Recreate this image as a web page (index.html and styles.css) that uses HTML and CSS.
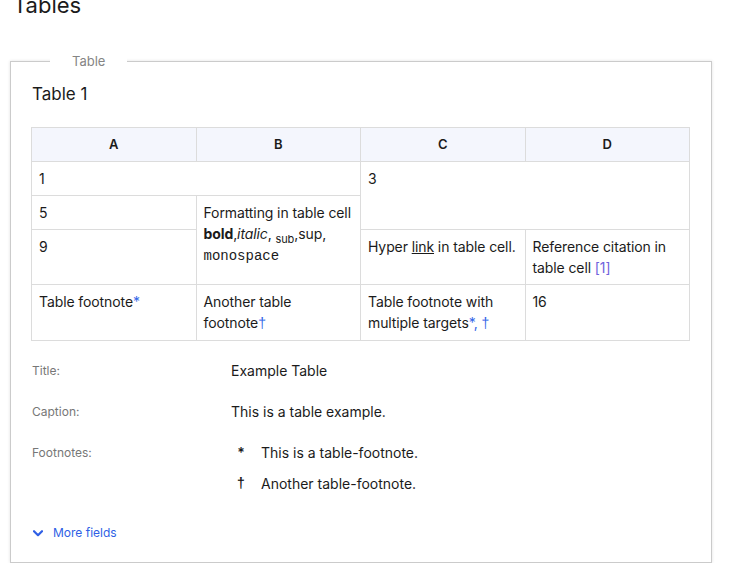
FILE: index.html
```html
<!DOCTYPE html>
<html>
<head>
<meta charset="utf-8">
<link rel="stylesheet" href="styles.css">
</head>
<body>
<h1 class="page-title">Tables</h1>
<section class="panel">
  <div class="panel-legend">Table</div>
  <h2 class="table-name">Table 1</h2>
  <table class="data-table">
    <thead>
      <tr><th>A</th><th>B</th><th>C</th><th>D</th></tr>
    </thead>
    <tbody>
      <tr><td colspan="2">1</td><td colspan="2" rowspan="2">3</td></tr>
      <tr><td>5</td><td rowspan="2">Formatting in table cell <b>bold</b>,<i>italic</i>, <sub>sub</sub>,<span>sup</span>, <code>monospace</code></td></tr>
      <tr><td>9</td><td>Hyper <a class="plain-link" href="#">link</a> in table cell.</td><td>Reference citation in table cell <a class="cite" href="#">[1]</a></td></tr>
      <tr><td>Table footnote<span class="fn">*</span></td><td>Another table footnote<span class="fn dagger">†</span></td><td>Table footnote with multiple targets<span class="fn">*</span><span class="fn">, <span class="dagger">†</span></span></td><td>16</td></tr>
    </tbody>
  </table>
  <div class="fields">
    <div class="field-label">Title:</div>
    <div class="field-value">Example Table</div>
    <div class="field-label">Caption:</div>
    <div class="field-value">This is a table example.</div>
    <div class="field-label">Footnotes:</div>
    <div class="field-value">
      <ul class="fn-list">
        <li><span class="fn-mark">*</span><span>This is a table-footnote.</span></li>
        <li><span class="fn-mark dagger">†</span><span>Another table-footnote.</span></li>
      </ul>
    </div>
  </div>
  <a class="more" href="#">
    <svg class="chev" width="10" height="7" viewBox="0 0 10 7"><path d="M1 1.2 L5 5.2 L9 1.2" fill="none" stroke="currentColor" stroke-width="2.2" stroke-linecap="round" stroke-linejoin="round"/></svg>
    <span>More fields</span>
  </a>
</section>
</body>
</html>
```
FILE: styles.css
```css
html, body {
  margin: 0;
  padding: 0;
  background: #fff;
}
body {
  font-family: Inter, "Noto Sans", sans-serif;
  color: #1b1b1b;
}
.page-title {
  font-size: 22px;
  font-weight: 400;
  line-height: 27px;
  margin: -8px 0 0 13px;
}
.panel {
  position: relative;
  box-sizing: border-box;
  width: 702px;
  margin: 42px 0 0 10px;
  padding: 20px 20px 20px 20px;
  border: 1px solid #cbcbcb;
  box-shadow: 0 0 3px rgba(0,0,0,0.12);
}
.panel-legend {
  position: absolute;
  top: -9px;
  left: 39px;
  padding: 0 22px;
  background: #fff;
  font-size: 13px;
  line-height: 16px;
  color: #858585;
}
.table-name {
  font-size: 17px;
  font-weight: 400;
  line-height: 24px;
  margin: 0 0 21px 1px;
}
.data-table {
  width: 659px;
  margin-left: 0;
  table-layout: fixed;
  border-collapse: collapse;
  font-size: 14px;
  line-height: 21px;
  letter-spacing: -0.1px;
}
.data-table th, .data-table td {
  border: 1px solid #dcdcdc;
  padding: 6px 3px 6px 7px;
  vertical-align: top;
  text-align: left;
}
.data-table th {
  background: #f4f6fd;
  text-align: center;
  font-weight: 600;
  font-size: 13px;
  padding: 6px 5px;
}
.data-table b { font-weight: 700; }
.data-table sub {
  font-size: 11px;
  line-height: 0;
}
.data-table code {
  font-family: "Liberation Mono", "Courier New", monospace;
  font-size: 14px;
  letter-spacing: 0;
}
.plain-link {
  color: inherit;
  text-decoration: underline;
}
.cite {
  color: #6f63dc;
  text-decoration: none;
}
.fn { color: #3367e8; }
.dagger {
  font-family: "Liberation Sans", Arial, sans-serif;
}
.fields {
  display: grid;
  grid-template-columns: 199px 1fr;
  row-gap: 20px;
  margin: 19px 0 0 1px;
  font-size: 14px;
  line-height: 21px;
}
.field-label {
  font-size: 12px;
  color: #777;
}
.fn-list {
  list-style: none;
  margin: 0;
  padding: 0;
  display: flex;
  flex-direction: column;
  gap: 10px;
}
.fn-list li {
  display: flex;
}
.fn-mark {
  width: 20px;
  text-align: center;
  margin-right: 10px;
  font-weight: 600;
}
.more {
  display: flex;
  align-items: center;
  gap: 10px;
  margin: 30px 0 0 2px;
  color: #2f5fe5;
  text-decoration: none;
  font-size: 12px;
  line-height: 18px;
}
.chev { display: block; }
```
